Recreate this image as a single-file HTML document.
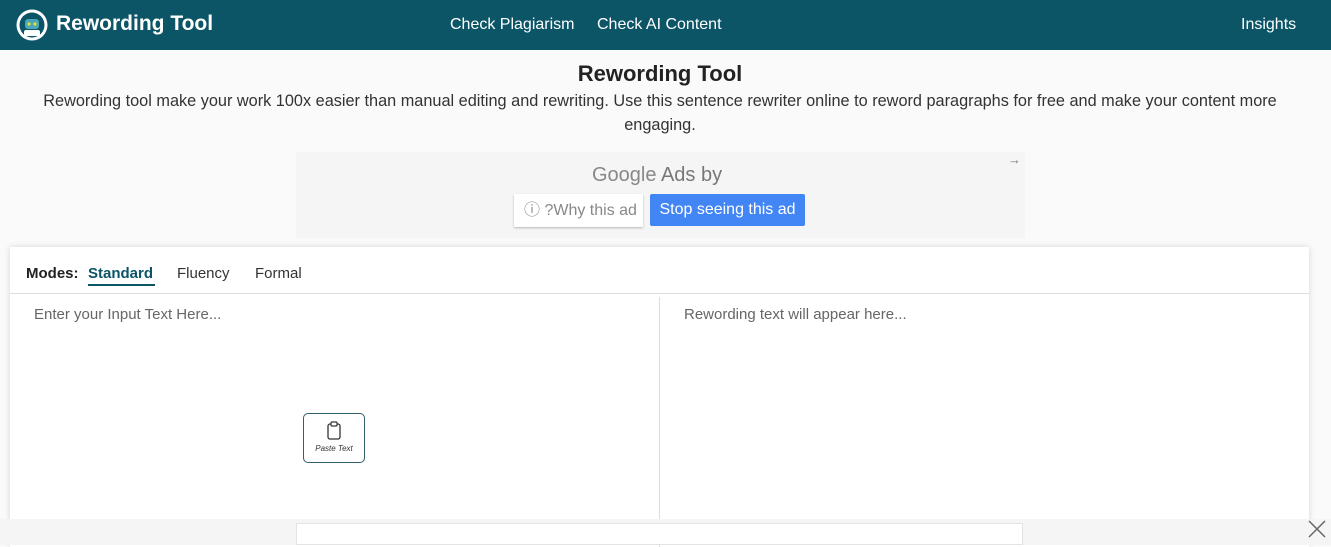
<!DOCTYPE html>
<html><head><style>
*{margin:0;padding:0;box-sizing:border-box}
body{width:1331px;height:545px;overflow:hidden;background:#fafafa;font-family:"Liberation Sans",sans-serif;position:relative}
.hdr{position:absolute;left:0;top:0;width:1331px;height:50px;background:#0b5566;color:#fff}
.hdr a{position:absolute;top:16px;font-size:16px;color:#fff}
.logo{position:absolute;left:56px;top:12px;font-size:21px;font-weight:bold}
h1{position:absolute;top:61px;width:1320px;text-align:center;font-size:22px;color:#222}
.desc{position:absolute;top:89px;left:20px;width:1280px;text-align:center;font-size:16.3px;line-height:24px;color:#333}
.ad{position:absolute;left:296px;top:152px;width:729px;height:86px;background:#f5f5f5}
.card{position:absolute;left:10px;top:247px;width:1299px;height:300px;background:#fff;box-shadow:0 0 6px rgba(0,0,0,.15)}
.modes{position:absolute;top:18px;font-size:15px;color:#333}
.ph{position:absolute;top:59px;font-size:15px;color:#666}
</style></head><body>
<div class="hdr">
<svg style="position:absolute;left:15px;top:8px" width="34" height="34"><circle cx="17" cy="17" r="15.5" fill="#fff"/><circle cx="17" cy="17" r="12.5" fill="#0b5566"/><rect x="10" y="11" width="14" height="10" rx="3" fill="#4aa6b8"/><circle cx="14" cy="16" r="1.6" fill="#e6e02a"/><circle cx="20" cy="16" r="1.6" fill="#e6e02a"/><rect x="9" y="22" width="16" height="6" rx="2" fill="#fff"/></svg>
<div class="logo">Rewording Tool</div>
<a style="left:450px">Check Plagiarism</a>
<a style="left:597px">Check AI Content</a>
<a style="left:1241px">Insights</a>
</div>
<h1>Rewording Tool</h1>
<div class="desc">Rewording tool make your work 100x easier than manual editing and rewriting. Use this sentence rewriter online to reword paragraphs for free and make your content more engaging.</div>
<div class="ad">
<div style="position:absolute;left:296px;top:12px;font-size:20px;color:#777"><span style="color:#888">Google</span> Ads by</div>
<div style="position:absolute;left:712px;top:0;color:#777;font-size:13px">→</div>
<div style="position:absolute;left:218px;top:42px;width:129px;height:33px;background:#fff;box-shadow:0 1px 2px rgba(0,0,0,.25);color:#888;font-size:16px;line-height:33px;padding-left:10px">ⓘ ?Why this ad</div>
<div style="position:absolute;left:354px;top:42px;width:155px;height:32px;background:#4285f4;color:#fff;font-size:16px;line-height:32px;text-align:center;border-radius:2px">Stop seeing this ad</div>
</div>
<div class="card">
<div class="modes" style="left:16px;font-weight:bold;color:#222">Modes:</div>
<div class="modes" style="left:78px;font-weight:bold;color:#0b5566">Standard</div>
<div style="position:absolute;left:78px;top:37px;width:67px;height:2px;background:#0b5566"></div>
<div class="modes" style="left:167px">Fluency</div>
<div class="modes" style="left:245px">Formal</div>
<div style="position:absolute;left:0;top:46px;width:1299px;height:1px;background:#ddd"></div>
<div style="position:absolute;left:649px;top:50px;width:1px;height:250px;background:#ddd"></div>
<div class="ph" style="left:24px">Enter your Input Text Here...</div>
<div class="ph" style="left:674px">Rewording text will appear here...</div>
<div style="position:absolute;left:293px;top:166px;width:62px;height:50px;border:1.5px solid #2f5f69;border-radius:5px;text-align:center">
<svg width="16" height="20" style="margin-top:7px"><rect x="2" y="3" width="12" height="15" rx="2" fill="none" stroke="#333" stroke-width="1.3"/><rect x="5" y="1" width="6" height="4" rx="1" fill="#fff" stroke="#333" stroke-width="1.2"/></svg>
<div style="font-size:8px;font-style:italic;color:#333;margin-top:-2px">Paste Text</div></div>
</div>
<div style="position:absolute;left:0;top:519px;width:1331px;height:26px;background:#f5f5f5"></div>
<div style="position:absolute;left:296px;top:523px;width:727px;height:22px;background:#fff;border:1px solid #e3e3e3"></div>
<svg style="position:absolute;left:1308px;top:520px" width="18" height="18"><path d="M1 1L17 17M17 1L1 17" stroke="#666" stroke-width="1.5"/></svg>
</body></html>
